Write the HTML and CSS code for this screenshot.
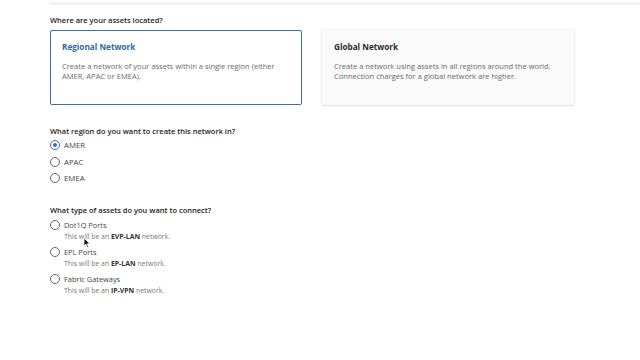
FILE: index.html
```html
<!DOCTYPE html>
<html>
<head>
<meta charset="utf-8">
<link rel="stylesheet" href="styles.css">
</head>
<body>
<div class="topline"></div>
<main class="page">
  <section class="group">
    <h2 class="q">Where are your assets located?</h2>
    <div class="cards">
      <div class="card selected">
        <div class="card-title">Regional Network</div>
        <p class="card-desc">Create a network of your assets within a single region (either AMER, APAC or EMEA).</p>
      </div>
      <div class="card">
        <div class="card-title">Global Network</div>
        <p class="card-desc">Create a network using assets in all regions around the world. Connection charges for a global network are higher.</p>
      </div>
    </div>
  </section>

  <section class="group region">
    <h2 class="q">What region do you want to create this network in?</h2>
    <ul class="radios">
      <li class="radio checked"><span class="dot"></span><span class="lbl">AMER</span></li>
      <li class="radio"><span class="dot"></span><span class="lbl">APAC</span></li>
      <li class="radio"><span class="dot"></span><span class="lbl">EMEA</span></li>
    </ul>
  </section>

  <section class="group assets">
    <h2 class="q">What type of assets do you want to connect?</h2>
    <ul class="radios big">
      <li class="radio"><span class="dot"></span><div><div class="lbl">Dot1Q Ports</div><div class="sub">This will be an <b>EVP-LAN</b> network.</div></div></li>
      <li class="radio"><span class="dot"></span><div><div class="lbl">EPL Ports</div><div class="sub">This will be an <b>EP-LAN</b> network.</div></div></li>
      <li class="radio"><span class="dot"></span><div><div class="lbl">Fabric Gateways</div><div class="sub">This will be an <b>IP-VPN</b> network.</div></div></li>
    </ul>
  </section>
</main>
<svg class="cursor" width="8" height="12" viewBox="0 0 8 12"><path d="M1 1 L1 9 L3 7.2 L4.4 10.5 L5.6 10 L4.3 6.8 L6.8 6.8 Z" fill="#111" stroke="#fff" stroke-width="0.8"/></svg>
</body>
</html>
```
FILE: styles.css
```css
* { box-sizing: border-box; }
html, body { margin: 0; padding: 0; background: #fff; }
body {
  font-family: "Open Sans", "Liberation Sans", sans-serif;
  color: #333;
  position: relative;
  width: 640px;
  height: 360px;
  overflow: hidden;
}
.topline {
  margin-left: 50px;
  height: 3px;
  margin-top: 2px;
  background: #f3f3f3;
}
.page { padding-left: 50px; }
.q {
  margin: 0;
  font-size: 7.5px;
  font-weight: 600;
  color: #1d1d1d;
  line-height: 10px;
}
.group:first-child .q { margin-top: 10px; }
.cards {
  display: flex;
  gap: 20px;
  margin-top: 5px;
}
.card {
  width: 252px;
  height: 75px;
  border-radius: 2px;
  background: #fafafa;
  box-shadow: 0 0 2px rgba(0,0,0,0.18), 0 1px 2px rgba(0,0,0,0.08);
  padding: 11px 12px 0;
}
.card.selected {
  background: #fff;
  border: 1.5px solid #3c6ea6;
  box-shadow: none;
  padding: 10px 11px 0;
}
.card-title {
  font-size: 8.2px;
  font-weight: 700;
  color: #2b2b2b;
  line-height: 12px;
}
.card.selected .card-title { color: #2f68a8; }
.card-desc {
  margin: 8px 0 0;
  font-size: 7.55px;
  line-height: 10px;
  color: #6a6a6a;
}
.region { margin-top: 21px; }
.assets { margin-top: 15px; }
.radios { list-style: none; margin: 4px 0 0; padding: 0; }
.radio {
  display: flex;
  align-items: flex-start;
  gap: 4px;
  height: 16.5px;
  font-size: 7.8px;
  color: #444;
}
.radio .lbl { line-height: 10px; }
.dot {
  width: 10px;
  height: 10px;
  border-radius: 50%;
  border: 1px solid #666;
  flex: none;
  display: flex;
  align-items: center;
  justify-content: center;
}
.radio.checked .dot { border-color: #3c6ea6; }
.radio.checked .dot::after {
  content: "";
  width: 4px;
  height: 4px;
  border-radius: 50%;
  background: #3c6ea6;
}
.radios.big { margin-top: 5px; }
.radios.big .radio { height: 27px; font-size: 7.4px; }
.sub {
  font-size: 6.9px;
  color: #777;
  line-height: 8px;
  margin-top: 3px;
}
.sub b { color: #333; font-weight: 700; }
.cursor { position: absolute; left: 83px; top: 237px; }
```
